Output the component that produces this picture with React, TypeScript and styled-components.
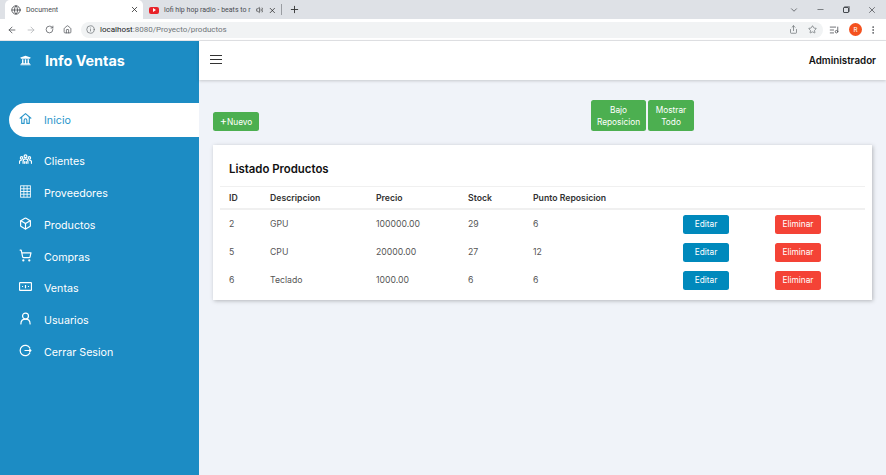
import React from "react";
import styled, { createGlobalStyle } from "styled-components";
import { ArrowLeft, ArrowRight, RotateCw, Home, Info, Star, X, Plus, ChevronDown, Minus, Globe, Volume2, Share, ListMusic, MoreVertical, Box, ShoppingCart } from "lucide-react";
import { FaUniversity } from "react-icons/fa";

const GlobalStyle = createGlobalStyle`
    html, body { margin: 0; padding: 0; }
    body {
        width: 886px;
        height: 475px;
        overflow: hidden;
        font-family: "Inter", "Liberation Sans", sans-serif;
        background: #f0f3f9;
    }
    * { box-sizing: border-box; }
`;

const Window = styled.div`
    width: 886px;
    height: 475px;
    display: flex;
    flex-direction: column;
    overflow: hidden;
`;

const TabBar = styled.div`
    height: 19px;
    background: #dee1e6;
    display: flex;
    align-items: flex-end;
    padding-left: 5px;
    color: #45494e;
`;

const Tab = styled.div<{ $active?: boolean }>`
    width: 138px;
    height: ${(p) => (p.$active ? "19px" : "18px")};
    background: ${(p) => (p.$active ? "#ffffff" : "transparent")};
    border-radius: 5px 5px 0 0;
    display: flex;
    align-items: center;
    padding: 0 4px 0 6px;
    gap: 5px;
    font-family: "Roboto", sans-serif;
    font-size: 7px;
    color: #4a4d52;
    white-space: nowrap;
`;

const TabTitle = styled.span`
    flex: 1;
`;

const YoutubeMark = styled.span`
    width: 10px;
    height: 7px;
    background: #e8232a;
    border-radius: 2px;
    flex: none;
    display: flex;
    align-items: center;
    justify-content: center;

    &::after {
        content: "";
        border-left: 3px solid #fff;
        border-top: 2px solid transparent;
        border-bottom: 2px solid transparent;
    }
`;

const TabDivider = styled.span`
    width: 1px;
    height: 11px;
    background: #9a9da2;
    align-self: center;
    margin-right: 7px;
`;

const NewTab = styled.span`
    align-self: center;
    display: flex;
`;

const WindowControls = styled.div`
    margin-left: auto;
    align-self: center;
    display: flex;
    align-items: center;
    gap: 17px;
    padding-right: 9px;
    color: #5a5d62;
`;

const MaxIcon = styled.span`
    width: 6px;
    height: 6px;
    border: 1px solid #45494e;
    border-radius: 1px;
    margin: 0 1px;
    box-shadow: 1px -1px 0 0 #8a8d92;
`;

const AddressBar = styled.div`
    height: 22px;
    background: #fff;
    border-bottom: 1px solid #e4e5e8;
    display: flex;
    align-items: center;
    padding-left: 7px;
    color: #54575c;
`;

const NavIcons = styled.div`
    display: flex;
    gap: 9px;
    width: 74px;
`;

const Omnibox = styled.div`
    width: 742px;
    height: 16px;
    background: #f1f3f4;
    border-radius: 8px;
    display: flex;
    align-items: center;
    padding: 0 5px;
    gap: 5px;
    font-family: "Roboto", sans-serif;
    font-size: 8px;
    color: #70757a;
`;

const Host = styled.span`
    color: #202124;
`;

const OmniEnd = styled.div`
    margin-left: auto;
    display: flex;
    gap: 10px;
    padding-right: 1px;
`;

const ProfileArea = styled.div`
    display: flex;
    align-items: center;
    margin-left: 6px;
    gap: 10px;
`;

const Avatar = styled.span`
    width: 13px;
    height: 13px;
    margin-right: -4px;
    border-radius: 50%;
    background: #f4511e;
    color: #fff;
    font-family: "Roboto", sans-serif;
    font-size: 6.5px;
    display: flex;
    align-items: center;
    justify-content: center;
`;

const Page = styled.div`
    flex: 1;
    display: flex;
    min-height: 0;
`;

const Sidebar = styled.aside`
    width: 199px;
    background: #1c8cc4;
    color: #fff;
    padding-left: 9px;
    flex: none;
`;

const Brand = styled.div`
    height: 39px;
    display: flex;
    align-items: center;
    padding-left: 11px;
    gap: 14px;
    font-size: 14.4px;
    font-weight: 700;
    margin-bottom: 23px;
`;

const Menu = styled.nav`
    display: flex;
    flex-direction: column;
`;

const MenuItem = styled.div<{ $active?: boolean }>`
    height: ${(p) => (p.$active ? "34px" : "31.85px")};
    margin-bottom: ${(p) => (p.$active ? "8.6px" : "0")};
    display: flex;
    align-items: center;
    gap: 12px;
    padding-left: 10px;
    font-size: 10.7px;
    font-weight: 400;
    color: ${(p) => (p.$active ? "#2a96cb" : "#fff")};
    background: ${(p) => (p.$active ? "#fff" : "transparent")};
    border-radius: 17px 0 0 17px;

    svg {
        flex: none;
        width: 13px;
        height: 13px;
        margin-top: -4px;
    }
`;

const Main = styled.main`
    flex: 1;
    min-width: 0;
`;

const TopBar = styled.header`
    height: 39px;
    background: #fff;
    box-shadow: 0 1px 3px rgba(0, 0, 0, 0.18);
    display: flex;
    align-items: center;
    justify-content: space-between;
    padding: 0 10px 2px 11px;
    font-size: 9.8px;
    font-weight: 600;
    color: #111;
`;

const UserName = styled.span`
    margin-top: 2px;
`;

const Burger = styled.div`
    width: 12px;
    height: 9px;
    border-top: 1.2px solid #333;
    border-bottom: 1.2px solid #333;
    position: relative;

    &::after {
        content: "";
        position: absolute;
        left: 0;
        right: 0;
        top: 2.7px;
        height: 1.2px;
        background: #333;
    }
`;

const Content = styled.div`
    padding: 20px 14px 0;
`;

const Actions = styled.div`
    display: flex;
    align-items: flex-end;
    height: 31px;
    gap: 2px;
`;

const Button = styled.button<{ $tone: "green" | "blue" | "red"; $width: number; $tall?: boolean }>`
    width: ${(p) => p.$width}px;
    height: ${(p) => (p.$tall ? "31px" : "19px")};
    padding: 0;
    border: 0;
    border-radius: 2.5px;
    color: #fff;
    font-family: inherit;
    font-size: 8.3px;
    line-height: 12px;
    background: ${(p) => ({ green: "#4caf50", blue: "#0089bc", red: "#f44336" }[p.$tone])};
`;

const PlusSign = styled.span`
    font-size: 11px;
    line-height: 10px;
`;

const Spacer = styled.div`
    width: 328px;
`;

const Card = styled.section`
    margin-top: 14px;
    background: #fff;
    padding: 0 7px 6px;
    box-shadow: 1px 1px 4px rgba(0, 0, 0, 0.25);
`;

const CardTitle = styled.h2`
    margin: 0;
    height: 41px;
    padding: 16px 0 0 9px;
    font-size: 11.4px;
    line-height: 16px;
    font-weight: 600;
    color: #111;
`;

const Row = styled.div<{ $head?: boolean }>`
    display: grid;
    grid-template-columns: 41px 106px 92px 65px 150px 92px 99px;
    align-items: center;
    height: ${(p) => (p.$head ? "24px" : "28px")};
    font-size: 8.7px;
    font-weight: ${(p) => (p.$head ? 600 : 400)};
    color: ${(p) => (p.$head ? "#333" : "#555")};
    ${(p) => (p.$head ? "border-top: 1px solid #f0f0f0; border-bottom: 2px solid #f0f0f0;" : "")}
`;

const Cell = styled.div`
    padding-left: 9px;
`;

const HomeIcon = () => (
    <svg viewBox="0 0 24 24" fill="none" stroke="currentColor" strokeWidth="2" strokeLinejoin="round" strokeLinecap="round">
        <path d="M2 11.5 12 3l10 8.5M5 9.5V21h4.5v-6a2.5 2.5 0 0 1 5 0v6H19V9.5" />
    </svg>
);

const GroupIcon = () => (
    <svg viewBox="0 0 24 24" fill="none" stroke="currentColor" strokeWidth="2.2" strokeLinecap="round">
        <circle cx="12" cy="6" r="2.6" />
        <circle cx="4.8" cy="9" r="2.2" />
        <circle cx="19.2" cy="9" r="2.2" />
        <path d="M7.5 19v-3.5a4.5 4.5 0 0 1 9 0V19M1 19v-2.5A3.5 3.5 0 0 1 4.5 13M23 19v-2.5a3.5 3.5 0 0 0-3.5-3.5M10.5 19v-3M13.5 19v-3" />
    </svg>
);

const BuildingIcon = () => (
    <svg viewBox="0 0 24 24" fill="none" stroke="currentColor" strokeWidth="1.6">
        <rect x="3" y="1.5" width="18" height="21" />
        <path d="M9 1.5v21M15 1.5v21M3 7h18M3 12h18M3 17h18" />
    </svg>
);

const MoneyIcon = () => (
    <svg viewBox="0 0 24 24" fill="none" stroke="currentColor" strokeWidth="2.2">
        <rect x="1" y="5" width="22" height="14" rx="1" />
        <path d="M12 9v6M5.5 12h2M16.5 12h2" />
    </svg>
);

const UserIcon = () => (
    <svg viewBox="0 0 24 24" fill="none" stroke="currentColor" strokeWidth="2.2" strokeLinecap="round">
        <circle cx="12" cy="7.5" r="5.5" />
        <path d="M3.5 22c0-5.5 3.5-9 8.5-9s8.5 3.5 8.5 9" />
    </svg>
);

const LogoutIcon = () => (
    <svg viewBox="0 0 24 24" fill="none" stroke="currentColor" strokeWidth="2.2" strokeLinecap="round" strokeLinejoin="round">
        <path d="M20 7.5A9.5 9.5 0 1 0 20 16.5" />
        <path d="M11 12h11M19.5 9.5 22 12l-2.5 2.5" />
    </svg>
);

const products = [
    { id: 2, name: "GPU", price: "100000.00", stock: 29, point: 6 },
    { id: 5, name: "CPU", price: "20000.00", stock: 27, point: 12 },
    { id: 6, name: "Teclado", price: "1000.00", stock: 6, point: 6 },
];

const menu = [
    { label: "Clientes", icon: <GroupIcon /> },
    { label: "Proveedores", icon: <BuildingIcon /> },
    { label: "Productos", icon: <Box strokeWidth={2.2} /> },
    { label: "Compras", icon: <ShoppingCart strokeWidth={2.2} /> },
    { label: "Ventas", icon: <MoneyIcon /> },
    { label: "Usuarios", icon: <UserIcon /> },
    { label: "Cerrar Sesion", icon: <LogoutIcon /> },
];

const App = () => {
    return (
        <Window>
            <GlobalStyle />
            <TabBar>
                <Tab $active>
                    <Globe size={10} color="#4a4d52" />
                    <TabTitle>Document</TabTitle>
                    <X size={9} color="#222" />
                </Tab>
                <Tab>
                    <YoutubeMark />
                    <TabTitle>lofi hip hop radio - beats to r</TabTitle>
                    <Volume2 size={8} color="#333" />
                    <X size={9} color="#222" />
                </Tab>
                <TabDivider />
                <NewTab><Plus size={11} color="#333" /></NewTab>
                <WindowControls>
                    <ChevronDown size={10} />
                    <Minus size={9} />
                    <MaxIcon />
                    <X size={10} />
                </WindowControls>
            </TabBar>
            <AddressBar>
                <NavIcons>
                    <ArrowLeft size={10} />
                    <ArrowRight size={10} color="#b5b7ba" />
                    <RotateCw size={9} />
                    <Home size={9} />
                </NavIcons>
                <Omnibox>
                    <Info size={9} />
                    <span><Host>localhost</Host>:8080/Proyecto/productos</span>
                    <OmniEnd>
                        <Share size={9} />
                        <Star size={9} />
                    </OmniEnd>
                </Omnibox>
                <ProfileArea>
                    <ListMusic size={10} />
                    <Avatar>R</Avatar>
                    <MoreVertical size={10} />
                </ProfileArea>
            </AddressBar>
            <Page>
                <Sidebar>
                    <Brand>
                        <FaUniversity size={11} />
                        Info Ventas
                    </Brand>
                    <Menu>
                        <MenuItem $active>
                            <HomeIcon />
                            Inicio
                        </MenuItem>
                        {menu.map((item) => (
                            <MenuItem key={item.label}>
                                {item.icon}
                                {item.label}
                            </MenuItem>
                        ))}
                    </Menu>
                </Sidebar>
                <Main>
                    <TopBar>
                        <Burger />
                        <UserName>Administrador</UserName>
                    </TopBar>
                    <Content>
                        <Actions>
                            <Button $tone="green" $width={46}><PlusSign>+</PlusSign>Nuevo</Button>
                            <Spacer />
                            <Button $tone="green" $width={55} $tall>Bajo<br />Reposicion</Button>
                            <Button $tone="green" $width={46} $tall>Mostrar<br />Todo</Button>
                        </Actions>
                        <Card>
                            <CardTitle>Listado Productos</CardTitle>
                            <Row $head>
                                <Cell>ID</Cell>
                                <Cell>Descripcion</Cell>
                                <Cell>Precio</Cell>
                                <Cell>Stock</Cell>
                                <Cell>Punto Reposicion</Cell>
                                <Cell />
                                <Cell />
                            </Row>
                            {products.map((p) => (
                                <Row key={p.id}>
                                    <Cell>{p.id}</Cell>
                                    <Cell>{p.name}</Cell>
                                    <Cell>{p.price}</Cell>
                                    <Cell>{p.stock}</Cell>
                                    <Cell>{p.point}</Cell>
                                    <Cell><Button $tone="blue" $width={46}>Editar</Button></Cell>
                                    <Cell><Button $tone="red" $width={46}>Eliminar</Button></Cell>
                                </Row>
                            ))}
                        </Card>
                    </Content>
                </Main>
            </Page>
        </Window>
    );
};

export default App;
